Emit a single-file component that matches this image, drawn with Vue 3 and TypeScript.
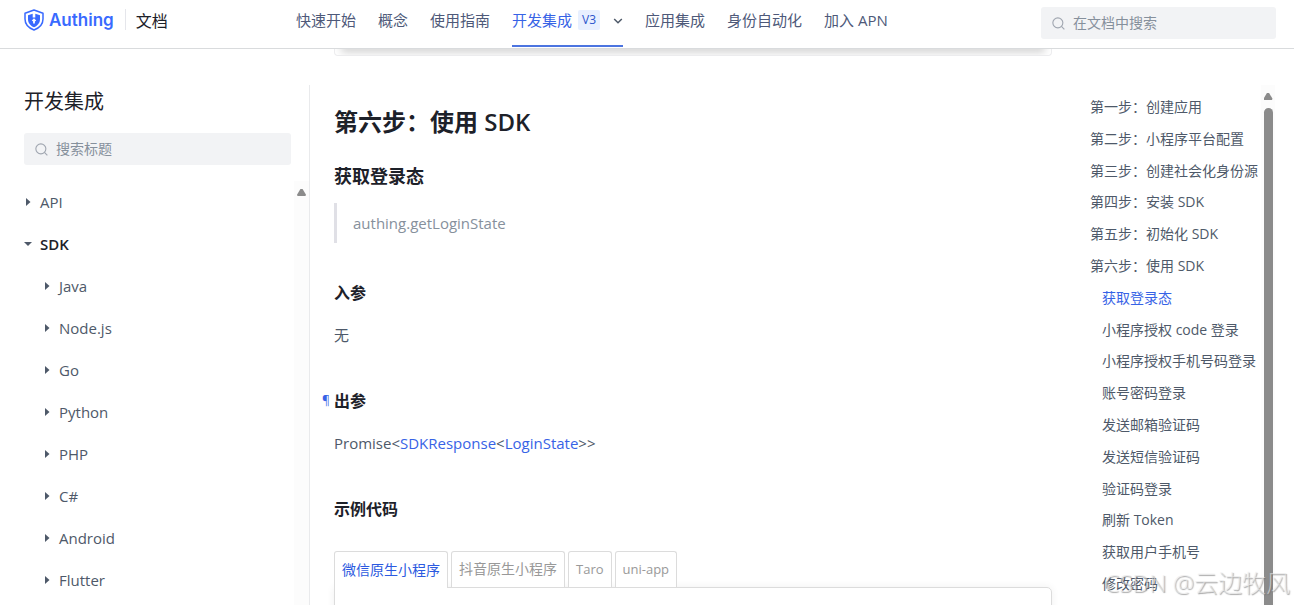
<script setup lang="ts">
import { ref } from 'vue'

interface NavItem {
  label: string
  version?: string
}

interface TreeItem {
  label: string
  level: number
  open?: boolean
}

interface TocItem {
  label: string
  level: number
}

const navItems: NavItem[] = [
  { label: '快速开始' },
  { label: '概念' },
  { label: '使用指南' },
  { label: '开发集成', version: 'V3' },
  { label: '应用集成' },
  { label: '身份自动化' },
  { label: '加入 APN' },
]

const treeItems: TreeItem[] = [
  { label: 'API', level: 1 },
  { label: 'SDK', level: 1, open: true },
  { label: 'Java', level: 2 },
  { label: 'Node.js', level: 2 },
  { label: 'Go', level: 2 },
  { label: 'Python', level: 2 },
  { label: 'PHP', level: 2 },
  { label: 'C#', level: 2 },
  { label: 'Android', level: 2 },
  { label: 'Flutter', level: 2 },
]

const tocItems: TocItem[] = [
  { label: '第一步：创建应用', level: 1 },
  { label: '第二步：小程序平台配置', level: 1 },
  { label: '第三步：创建社会化身份源', level: 1 },
  { label: '第四步：安装 SDK', level: 1 },
  { label: '第五步：初始化 SDK', level: 1 },
  { label: '第六步：使用 SDK', level: 1 },
  { label: '获取登录态', level: 2 },
  { label: '小程序授权 code 登录', level: 2 },
  { label: '小程序授权手机号码登录', level: 2 },
  { label: '账号密码登录', level: 2 },
  { label: '发送邮箱验证码', level: 2 },
  { label: '发送短信验证码', level: 2 },
  { label: '验证码登录', level: 2 },
  { label: '刷新 Token', level: 2 },
  { label: '获取用户手机号', level: 2 },
  { label: '修改密码', level: 2 },
]

interface CodeTab {
  label: string
  latin?: boolean
}

const tabs: CodeTab[] = [
  { label: '微信原生小程序' },
  { label: '抖音原生小程序' },
  { label: 'Taro', latin: true },
  { label: 'uni-app', latin: true },
]

const activeNav = ref('开发集成')
const activeToc = ref('获取登录态')
const activeTab = ref('微信原生小程序')
const siteQuery = ref('')
const titleQuery = ref('')
</script>

<template>
  <div class="page">
    <header class="header">
      <div class="brand">
        <a class="logo" href="#" aria-label="Authing">
          <svg class="logo-mark" viewBox="0 0 20 22" aria-hidden="true">
            <path d="M10 1 L19 4.300 V10 C19 15.400 15.300 19 10 21 C4.700 19 1 15.400 1 10 V4.300 Z" fill="none" stroke="#396aff" stroke-width="1.500" stroke-linejoin="round" />
            <path d="M8.700 4.800 L4 6.300 V10.200 C4 14 6.500 16.700 10 18.200 C13.500 16.700 16 14 16 10.200 V6.300 L11.300 4.800 V8.400 H8.700 Z" fill="#396aff" />
            <path d="M10 9.200 L12.200 11.400 L10.900 12.600 V14.600 H9.100 V12.600 L7.800 11.400 Z" fill="#fff" />
          </svg>
          <span class="logo-text">Authing</span>
        </a>
        <span class="brand-doc">文档</span>
      </div>
      <nav class="nav" aria-label="主导航">
        <a
          v-for="item in navItems"
          :key="item.label"
          href="#"
          class="nav-link"
          :class="{ active: item.label === activeNav }"
          @click.prevent="activeNav = item.label"
        >
          {{ item.label }}
          <template v-if="item.version">
            <span class="version">{{ item.version }}</span>
            <svg class="chevron" viewBox="0 0 10 10" aria-hidden="true">
              <path d="M1.200 3 L5 6.800 L8.800 3" fill="none" stroke="currentColor" stroke-width="1.500" />
            </svg>
          </template>
        </a>
      </nav>
      <label class="search site-search">
        <svg viewBox="0 0 14 14" aria-hidden="true">
          <circle cx="6.300" cy="6.300" r="5.400" />
          <path d="M10.200 10.200 L13.300 13.300" />
        </svg>
        <input v-model="siteQuery" type="text" placeholder="在文档中搜索" aria-label="在文档中搜索" />
      </label>
    </header>

    <div class="body">
      <aside class="sidebar">
        <h2 class="sidebar-title">开发集成</h2>
        <label class="search title-search">
          <svg viewBox="0 0 14 14" aria-hidden="true">
            <circle cx="6.300" cy="6.300" r="5.400" />
            <path d="M10.200 10.200 L13.300 13.300" />
          </svg>
          <input v-model="titleQuery" type="text" placeholder="搜索标题" aria-label="搜索标题" />
        </label>
        <div class="tree-area">
          <ul class="tree">
            <li v-for="item in treeItems" :key="item.label">
              <a href="#" class="tree-link" :class="{ nested: item.level === 2, open: item.open }">
                <svg viewBox="0 0 8 8" aria-hidden="true">
                  <path v-if="item.open" d="M0 2 H8 L4 6 Z" />
                  <path v-else d="M2 0 L6.500 4 L2 8 Z" />
                </svg>
                {{ item.label }}
              </a>
            </li>
          </ul>
          <div class="track" aria-hidden="true"><span class="track-arrow"></span></div>
        </div>
      </aside>

      <main class="content">
        <div class="code-end"><div class="code-shade"></div></div>
        <h1>第六步：使用 SDK</h1>
        <h2>获取登录态</h2>
        <blockquote>authing.getLoginState</blockquote>
        <h3>入参</h3>
        <p>无</p>
        <h3><a class="anchor" href="#" aria-label="出参">¶</a>出参</h3>
        <p>Promise&lt;<a href="#">SDKResponse</a>&lt;<a href="#">LoginState</a>&gt;&gt;</p>
        <h3>示例代码</h3>
        <div class="tabs" role="tablist">
          <button
            v-for="tab in tabs"
            :key="tab.label"
            type="button"
            role="tab"
            class="tab"
            :class="{ active: tab.label === activeTab, latin: tab.latin }"
            :aria-selected="tab.label === activeTab"
            @click="activeTab = tab.label"
          >{{ tab.label }}</button>
        </div>
        <div class="tab-panel" role="tabpanel"></div>
      </main>

      <aside class="toc">
        <ul class="toc-list">
          <li v-for="item in tocItems" :key="item.label">
            <a
              href="#"
              class="toc-link"
              :class="{ nested: item.level === 2, active: item.label === activeToc }"
              @click.prevent="activeToc = item.label"
            >{{ item.label }}</a>
          </li>
        </ul>
        <div class="track toc-track" aria-hidden="true">
          <span class="track-arrow"></span>
          <span class="thumb"></span>
        </div>
      </aside>
    </div>
    <div class="watermark">CSDN @云边牧风</div>
  </div>
</template>

<style>
body {
  margin: 0;
  background: #fff;
}
</style>

<style scoped>
.page {
  position: relative;
  display: flex;
  flex-direction: column;
  height: 100vh;
  overflow: hidden;
  color: #4e5969;
  font-family: "Open Sans", "Noto Sans CJK SC", sans-serif;
  font-size: 14px;
}

.page * {
  box-sizing: border-box;
}

a {
  color: inherit;
  text-decoration: none;
}

ul {
  margin: 0;
  padding: 0;
  list-style: none;
}

.header {
  display: flex;
  flex: none;
  align-items: flex-start;
  height: 49px;
  padding: 0 18px 0 24px;
  border-bottom: 1px solid #d9dbdd;
  background: #fff;
  z-index: 1;
}

.brand {
  display: flex;
  flex: none;
  align-items: center;
  width: 272px;
  height: 39px;
}

.logo {
  display: flex;
  align-items: center;
  gap: 5px;
  height: 21px;
  padding-right: 11px;
  border-right: 1px solid #e5e6eb;
  color: #396aff;
}

.logo-mark {
  width: 20px;
  height: 22px;
}

.logo-text {
  font-family: Inter, sans-serif;
  font-size: 17px;
  font-weight: 600;
}

.brand-doc {
  margin-left: 10px;
  color: #1d2129;
  font-size: 16px;
}

.nav {
  display: flex;
  gap: 22px;
  height: 47px;
}

.nav-link {
  display: flex;
  align-items: center;
  padding-bottom: 7px;
  border-bottom: 2px solid transparent;
  color: #4e5979;
  font-size: 15px;
  white-space: nowrap;
}

.nav-link.active {
  border-color: #4c74e0;
  color: #3763e6;
}

.version {
  margin: 2px 0 0 6px;
  padding: 0 4px;
  border-radius: 2px;
  background: #e8f0ff;
  color: #2c56cc;
  font-size: 12px;
  line-height: 20px;
}

.chevron {
  width: 10px;
  height: 10px;
  margin: 4px 0 0 13px;
  color: #4e5969;
}

.search {
  display: flex;
  align-items: center;
  gap: 8px;
  height: 32px;
  padding: 0 11px;
  border-radius: 3px;
  background: #f2f3f5;
}

.search svg {
  flex: none;
  width: 13px;
  height: 13px;
  fill: none;
  stroke: #a0a6b0;
  stroke-width: 1.2;
}

.search input {
  flex: 1;
  min-width: 0;
  padding: 0 0 2px;
  border: 0;
  outline: 0;
  background: transparent;
  color: #1d2129;
  font-family: inherit;
  font-size: 14px;
}

.search input::placeholder {
  color: #86909c;
}

.site-search {
  width: 235px;
  margin: 7px 0 0 auto;
}

.body {
  display: grid;
  flex: 1;
  grid-template-columns: 310px minmax(0, 1fr) 204px;
  min-height: 0;
}

.sidebar {
  display: flex;
  flex-direction: column;
  min-height: 0;
  margin-top: 36px;
  padding-left: 24px;
  border-right: 1px solid #e9eaec;
}

.sidebar-title {
  flex: none;
  margin: 0 0 14px;
  color: #1d2129;
  font-size: 20px;
  font-weight: 400;
  line-height: 34px;
}

.title-search {
  flex: none;
  margin-right: 18px;
}

.tree-area {
  display: flex;
  flex: 1;
  min-height: 0;
  margin-top: 16px;
  overflow: hidden;
}

.tree {
  flex: 1;
}

.tree-link {
  display: flex;
  align-items: center;
  gap: 8px;
  height: 42px;
  font-size: 15px;
}

.tree-link svg {
  width: 8px;
  height: 8px;
  fill: #4e5969;
}

.tree-link.nested {
  padding-left: 19px;
}

.tree-link.open {
  color: #1d2129;
  font-weight: 600;
}

.track {
  display: flex;
  flex: none;
  flex-direction: column;
  align-items: center;
  width: 15px;
  padding-top: 8px;
  background: #fcfcfc;
}

.track-arrow {
  flex: none;
  width: 9px;
  height: 7px;
  background: #8b8b8b;
  clip-path: polygon(38% 0, 62% 0, 100% 82%, 94% 100%, 6% 100%, 0 82%);
}

.content {
  min-width: 0;
  min-height: 0;
  padding: 0 38px 0 24px;
  overflow: hidden;
}

.code-end {
  height: 7px;
  padding: 0 8px;
  border: 1px solid #ececee;
  border-top: 0;
  border-radius: 0 0 4px 4px;
  overflow: hidden;
}

.code-shade {
  height: 1px;
  margin-top: -1px;
  box-shadow: 0 0 8px 2px #b5b5b5;
}

h1,
h2,
h3 {
  color: #1d2129;
  font-weight: 700;
}

.content h1 {
  margin: 48px 0 0;
  font-size: 24px;
  font-weight: 600;
  line-height: 36px;
}

.content h2 {
  margin: 22px 0 0;
  font-size: 18px;
  line-height: 28px;
}

blockquote {
  margin: 13px 0 0;
  padding-left: 16px;
  border-left: 3px solid #e0e0e6;
  color: #86909c;
  font-size: 15px;
  line-height: 40px;
}

.content h3 {
  margin: 38px 0 0;
  font-size: 16px;
  line-height: 24px;
}

.content p {
  margin: 18px 0 0;
  font-size: 15px;
  line-height: 24px;
}

.content p + h3 {
  margin-top: 42px;
}

.content p a {
  color: #3763e6;
}

.anchor {
  float: left;
  width: 12px;
  margin-left: -12px;
  color: #3763e6;
  font-size: 12px;
  font-weight: 400;
}

.tabs {
  display: flex;
  gap: 3px;
  margin-top: 30px;
}

.tab {
  height: 36px;
  padding: 0 7px 3px;
  border: 1px solid #dcdcdc;
  border-bottom: 0;
  border-radius: 3px 3px 0 0;
  background: #fff;
  color: #999;
  font-family: inherit;
  font-size: 14px;
}

.tab.latin {
  padding-bottom: 1px;
  font-size: 13px;
}

.tab.active {
  height: 37px;
  margin-bottom: -1px;
  color: #2c5ae0;
  z-index: 1;
}

.tab-panel {
  height: 120px;
  border: 1px solid #dcdcdc;
  border-radius: 0 5px 5px 5px;
  box-shadow: 0 0 8px #f0f0f0;
}

.toc {
  display: flex;
  min-height: 0;
  margin-top: 36px;
  padding-right: 19px;
}

.toc-list {
  display: grid;
  flex: 1;
  grid-auto-rows: 1fr;
  min-width: 0;
  padding: 6px 0 5px;
}

.toc-link {
  display: flex;
  align-items: center;
  height: 100%;
  color: #4e5969;
  line-height: 20px;
  white-space: nowrap;
}

.toc-link.nested {
  padding-left: 12px;
}

.toc-link.active {
  color: #3763e6;
}

.toc-track {
  width: 14px;
}

.thumb {
  flex: 1;
  width: 9px;
  margin-top: 8px;
  border-radius: 5px 5px 0 0;
  background: #8b8b8b;
}

.watermark {
  position: absolute;
  right: 4px;
  bottom: 4px;
  color: rgba(235, 235, 235, 0.6);
  font-size: 24px;
  font-weight: 300;
  line-height: 36px;
  text-shadow: 1px 1px 1px rgba(110, 110, 110, 0.6);
  pointer-events: none;
}
</style>
